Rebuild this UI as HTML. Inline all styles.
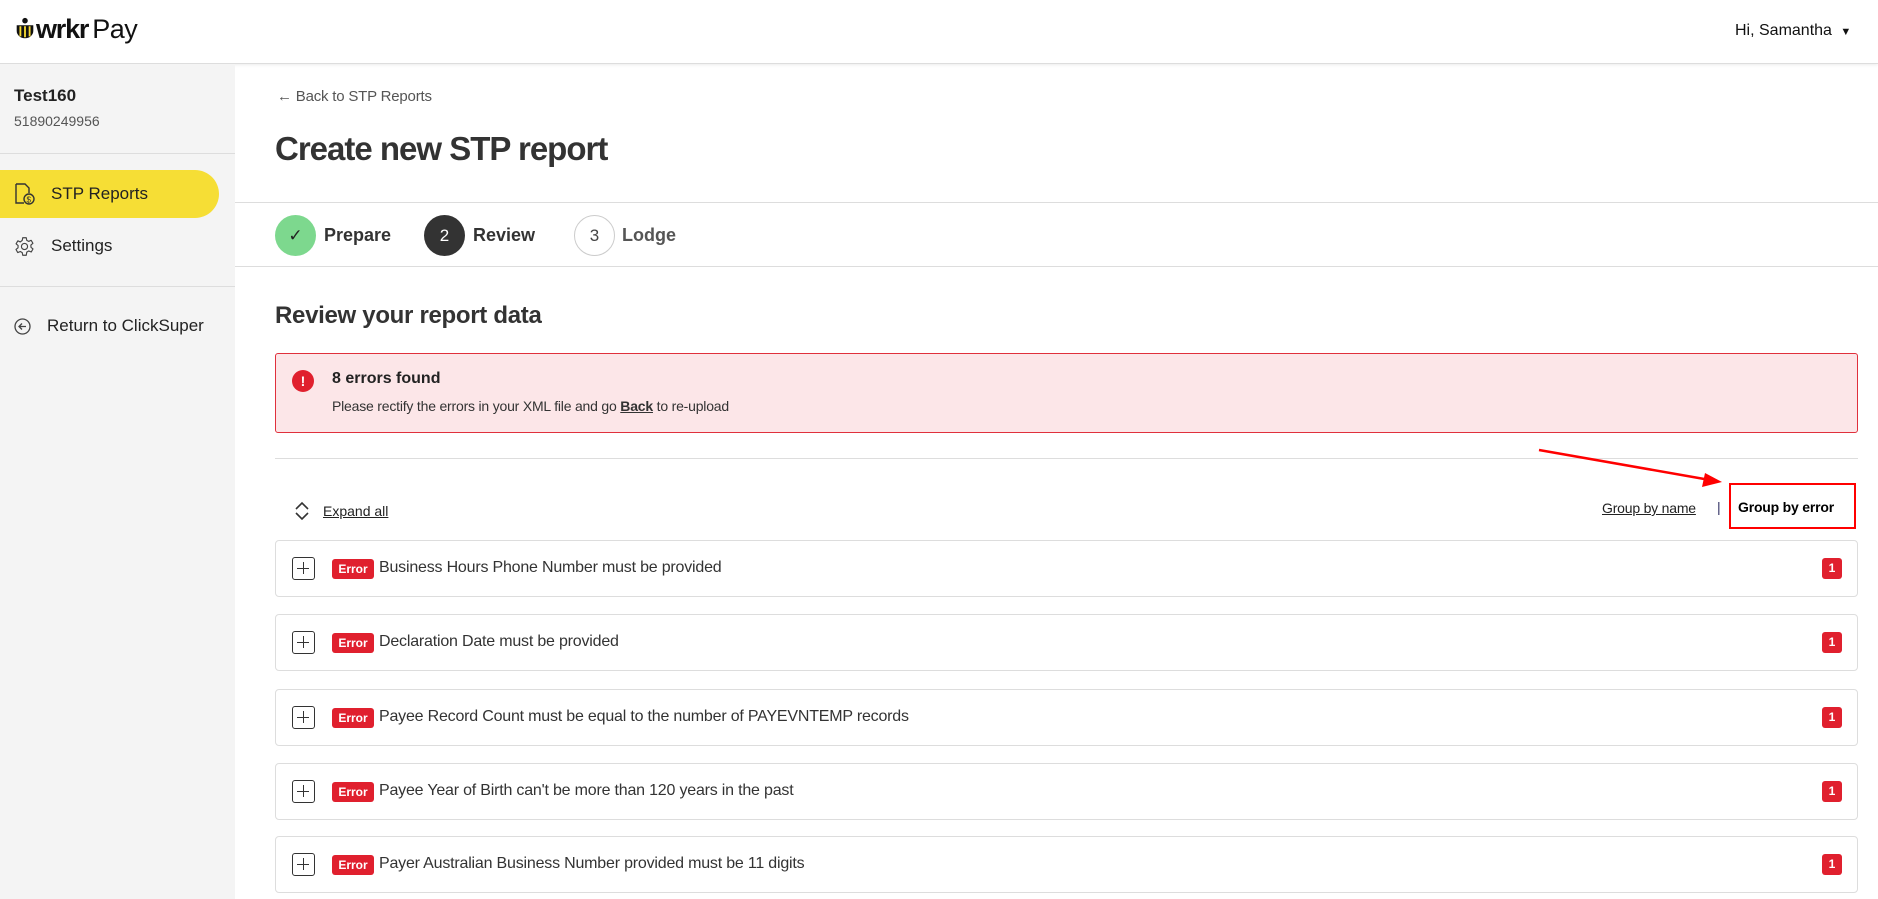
<!DOCTYPE html>
<html><head><meta charset="utf-8"><style>
*{box-sizing:border-box;margin:0;padding:0}
body{width:1878px;height:899px;overflow:hidden;font-family:"Liberation Sans",Arial,sans-serif;color:#333;background:#fff;position:relative}
.abs{position:absolute}
.hdr{left:0;top:0;width:1878px;height:64px;background:#fff;border-bottom:1px solid #ddd;box-shadow:0 1px 3px rgba(0,0,0,.08)}
.side{left:0;top:64px;width:235px;height:835px;background:#f4f4f4}
.row{left:275px;width:1583px;height:57px;border:1px solid #ddd;border-radius:4px;background:#fff}
.plus{position:absolute;left:16px;top:16px;width:23px;height:23px;border:1.5px solid #333;border-radius:3px}
.plus:before{content:"";position:absolute;left:4px;top:9.5px;width:12px;height:1.5px;background:#333}
.plus:after{content:"";position:absolute;left:9.5px;top:4px;width:1.5px;height:12px;background:#333}
.eb{position:absolute;left:56px;top:18px;width:42px;height:20px;background:#e0202e;color:#fff;font-size:12px;font-weight:bold;border-radius:3px;text-align:center;line-height:20px}
.rt{position:absolute;left:103px;top:18px;font-size:16px;color:#333;letter-spacing:-0.2px}
.cnt{position:absolute;right:15px;top:17px;width:20px;height:21px;background:#e0202e;color:#fff;font-size:12px;font-weight:bold;border-radius:3px;text-align:center;line-height:21px}
.circ{width:41px;height:41px;border-radius:50%;top:215px;text-align:center;line-height:41px;font-size:17px}
.sl{top:225px;font-size:18px;font-weight:bold}
</style></head><body>
<div class="abs hdr"></div>
<div class="abs" style="left:14px;top:14px;font-size:27px;font-weight:bold;color:#111;letter-spacing:-1.2px">
<svg width="22" height="24" viewBox="0 0 22 26" style="vertical-align:-3px"><circle cx="11" cy="4" r="3" fill="#111"/><path d="M2 9h18v6a9 8 0 0 1-18 0z" fill="#111"/><path d="M6 10v11M11 10v12M16 10v11" stroke="#f6d930" stroke-width="2"/></svg>wrkr<span style="font-weight:normal;margin-left:4px;letter-spacing:-0.5px">Pay</span></div>
<div class="abs" style="left:1735px;top:22px;font-size:16px;color:#111">Hi, Samantha <span style="font-size:11px;margin-left:4px">▼</span></div>
<div class="abs side"></div>
<div class="abs" style="left:14px;top:86px;font-size:17px;font-weight:bold;color:#222">Test160</div>
<div class="abs" style="left:14px;top:113px;font-size:14px;color:#555">51890249956</div>
<div class="abs" style="left:0;top:153px;width:235px;height:1px;background:#ddd"></div>
<div class="abs" style="left:0;top:170px;width:219px;height:48px;background:#f6de35;border-radius:0 24px 24px 0"></div>
<svg class="abs" style="left:14px;top:183px" width="22" height="22" viewBox="0 0 22 22"><path d="M2 1h9l4 4v5M2 1v19h8" fill="none" stroke="#333" stroke-width="1.4"/><circle cx="15" cy="16" r="5" fill="none" stroke="#333" stroke-width="1.4"/><text x="12.5" y="19.5" font-size="8" fill="#333">$</text></svg>
<div class="abs" style="left:51px;top:184px;font-size:17px;color:#222">STP Reports</div>
<svg class="abs" style="left:14px;top:236px" width="21" height="21" viewBox="0 0 24 24"><path d="M10 2h4l.6 3 2.2 1.2 2.8-1.3 2 3.4-2.3 2 .1 2.6 2.3 1.9-2 3.5-2.9-1.2-2.2 1.3L14 22h-4l-.6-3-2.2-1.3-2.9 1.2-2-3.5 2.3-1.9.1-2.6-2.3-2 2-3.4 2.8 1.3L9.4 5z" fill="none" stroke="#444" stroke-width="1.3" stroke-linejoin="round"/><circle cx="12" cy="12" r="3.5" fill="none" stroke="#444" stroke-width="1.3"/></svg>
<div class="abs" style="left:51px;top:236px;font-size:17px;color:#222">Settings</div>
<div class="abs" style="left:0;top:286px;width:235px;height:1px;background:#ddd"></div>
<svg class="abs" style="left:14px;top:318px" width="17" height="17" viewBox="0 0 17 17"><circle cx="8.5" cy="8.5" r="7.5" fill="none" stroke="#444" stroke-width="1.3"/><path d="M12 8.5H5M8 5.5l-3 3 3 3" fill="none" stroke="#444" stroke-width="1.3"/></svg>
<div class="abs" style="left:47px;top:316px;font-size:17px;color:#222">Return to ClickSuper</div>

<div class="abs" style="left:277px;top:88px;font-size:15px;color:#555;letter-spacing:-0.2px">← Back to STP Reports</div>
<div class="abs" style="left:275px;top:130px;font-size:33px;font-weight:bold;color:#333;letter-spacing:-1px">Create new STP report</div>
<div class="abs" style="left:235px;top:202px;width:1643px;height:1px;background:#ddd"></div>
<div class="abs circ" style="left:275px;background:#7dd88e;color:#222">✓</div>
<div class="abs sl" style="left:324px;color:#333">Prepare</div>
<div class="abs circ" style="left:424px;background:#333;color:#fff">2</div>
<div class="abs sl" style="left:473px;color:#333">Review</div>
<div class="abs circ" style="left:574px;border:1px solid #ccc;color:#444;line-height:39px">3</div>
<div class="abs sl" style="left:622px;color:#555">Lodge</div>
<div class="abs" style="left:235px;top:266px;width:1643px;height:1px;background:#ddd"></div>
<div class="abs" style="left:275px;top:302px;font-size:24px;font-weight:bold;color:#333;letter-spacing:-0.3px">Review your report data</div>
<div class="abs" style="left:275px;top:353px;width:1583px;height:80px;background:#fce6e8;border:1px solid #e0303c;border-radius:3px"></div>
<div class="abs" style="left:292px;top:370px;width:22px;height:22px;border-radius:50%;background:#e0202e;color:#fff;font-size:14px;font-weight:bold;text-align:center;line-height:22px">!</div>
<div class="abs" style="left:332px;top:370px;font-size:16px;font-weight:bold;color:#222">8 errors found</div>
<div class="abs" style="left:332px;top:398px;font-size:14px;color:#333;letter-spacing:-0.2px">Please rectify the errors in your XML file and go <u style="font-weight:bold">Back</u> to re-upload</div>
<div class="abs" style="left:275px;top:458px;width:1583px;height:1px;background:#ddd"></div>
<svg class="abs" style="left:293px;top:500px" width="18" height="22" viewBox="0 0 18 22"><path d="M3 9l6-6 6 6M3 13l6 6 6-6" fill="none" stroke="#333" stroke-width="1.6"/></svg>
<div class="abs" style="left:323px;top:503px;font-size:14px;color:#222;text-decoration:underline">Expand all</div>
<div class="abs" style="left:1602px;top:500px;font-size:14px;color:#222;text-decoration:underline;letter-spacing:-0.2px">Group by name</div>
<div class="abs" style="left:1717px;top:499px;font-size:14px;color:#336">|</div>
<div class="abs" style="left:1729px;top:483px;width:127px;height:46px;border:2.5px solid #f00"></div>
<div class="abs" style="left:1738px;top:499px;font-size:14px;font-weight:bold;color:#000;letter-spacing:-0.2px">Group by error</div>
<svg class="abs" style="left:1530px;top:440px" width="200" height="50"><line x1="9" y1="10" x2="180" y2="40" stroke="#f00" stroke-width="2.5"/><polygon points="192,42 175,33 172,47" fill="#f00"/></svg>

<div class="abs row" style="top:540px"><div class="plus"></div><div class="eb">Error</div><div class="rt">Business Hours Phone Number must be provided</div><div class="cnt">1</div></div>
<div class="abs row" style="top:614px"><div class="plus"></div><div class="eb">Error</div><div class="rt">Declaration Date must be provided</div><div class="cnt">1</div></div>
<div class="abs row" style="top:689px"><div class="plus"></div><div class="eb">Error</div><div class="rt">Payee Record Count must be equal to the number of PAYEVNTEMP records</div><div class="cnt">1</div></div>
<div class="abs row" style="top:763px"><div class="plus"></div><div class="eb">Error</div><div class="rt">Payee Year of Birth can't be more than 120 years in the past</div><div class="cnt">1</div></div>
<div class="abs row" style="top:836px"><div class="plus"></div><div class="eb">Error</div><div class="rt">Payer Australian Business Number provided must be 11 digits</div><div class="cnt">1</div></div>
</body></html>
